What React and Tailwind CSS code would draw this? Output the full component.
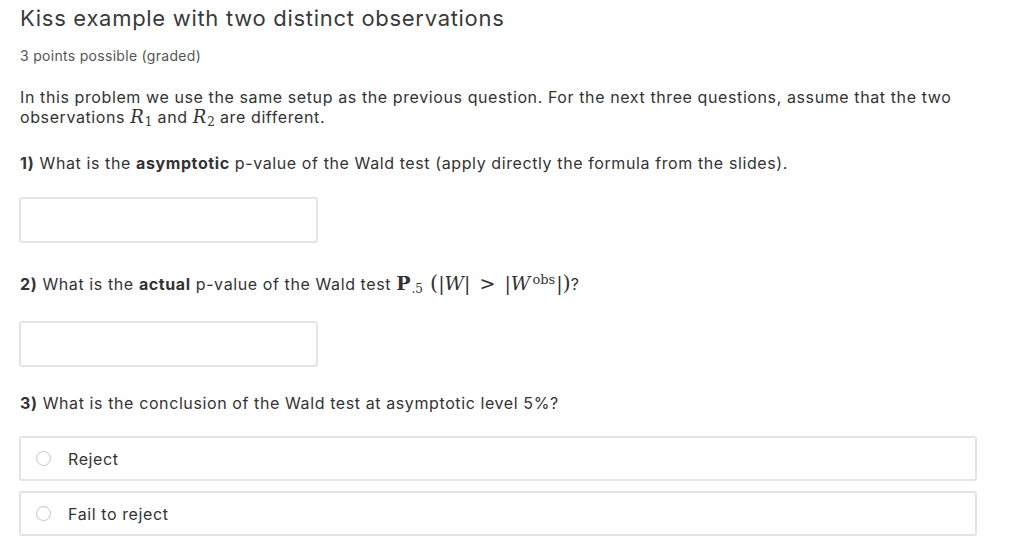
import React from "react";

const math = { fontFamily: '"DejaVu Serif", "Liberation Serif", serif', letterSpacing: 0 };

const Var = ({ children }) => (
  <span className="italic text-[18px] leading-none" style={math}>
    {children}
  </span>
);

const Sub = ({ children }) => (
  <sub className="not-italic ml-[1px] text-[12px] leading-none">{children}</sub>
);

const Choice = ({ label }) => (
  <label className="flex items-center h-[45px] w-[958px] border-2 border-[#e4e4e4] rounded-[3px] pl-[15px]">
    <span className="w-[15px] h-[15px] rounded-full border border-[#c4c4c4] bg-white" />
    <span className="ml-[17px] text-[16px] tracking-[0.6px] text-[#333]">{label}</span>
  </label>
);

export default function App() {
  return (
    <div
      className="bg-white w-[1024px] h-[556px] pl-[20px] pt-[4px] text-[#333]"
      style={{ fontFamily: 'Inter, "Noto Sans", sans-serif' }}
    >
      <h1 className="text-[22px] tracking-[0.7px] leading-[28px] text-[#3a3a3a]">
        Kiss example with two distinct observations
      </h1>
      <p className="mt-[14px] text-[14px] tracking-[0.3px] leading-[20px] text-[#555]">
        3 points possible (graded)
      </p>

      <div className="text-[16px] tracking-[0.6px]">
        <p className="mt-[21px] leading-[20px] w-[960px]">
          In this problem we use the same setup as the previous question. For
          the next three questions, assume that the two observations{" "}
          <Var>
            R<Sub>1</Sub>
          </Var>{" "}
          and{" "}
          <Var>
            R<Sub>2</Sub>
          </Var>{" "}
          are different.
        </p>

        <p className="mt-[26px] leading-[20px]">
          <strong>1)</strong> What is the <strong>asymptotic</strong> p-value
          of the Wald test (apply directly the formula from the slides).
        </p>
        <div className="mt-[24px] -ml-[1px] w-[299px] h-[46px] border-2 border-[#e4e4e4] rounded-[3px]" />

        <p className="mt-[30px] leading-[20px]">
          <strong>2)</strong> What is the <strong>actual</strong> p-value of
          the Wald test{" "}
          <span className="text-[19px] leading-none" style={math}>
            <span className="font-bold">P</span>
            <sub className="ml-[1px] text-[12px] leading-none">.5</sub>
            <span className="ml-[7px] text-[21px]">(</span>|
            <span className="italic">W</span>|
            <span className="mx-[9px]">&gt;</span>|
            <span className="italic">W</span>
            <sup className="ml-[2px] text-[13px] leading-none">obs</sup>
            <span className="ml-[1px]">|</span>
            <span className="text-[21px]">)</span>
          </span>
          ?
        </p>
        <div className="mt-[27px] -ml-[1px] w-[299px] h-[46px] border-2 border-[#e4e4e4] rounded-[3px]" />

        <p className="mt-[26px] leading-[20px]">
          <strong>3)</strong> What is the conclusion of the Wald test at
          asymptotic level 5%?
        </p>
      </div>
      <div className="mt-[23px] -ml-[1px] flex flex-col gap-[10px]">
        <Choice label="Reject" />
        <Choice label="Fail to reject" />
      </div>
    </div>
  );
}
